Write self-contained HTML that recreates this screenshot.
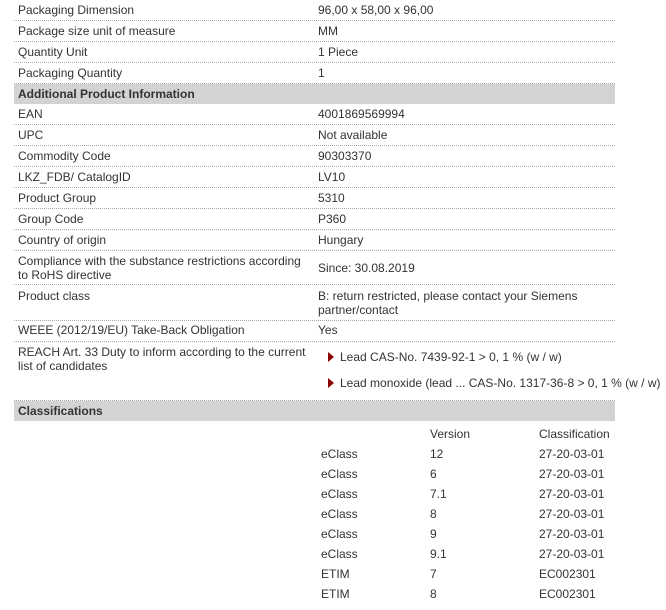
<!DOCTYPE html>
<html><head><meta charset="utf-8"><style>
body{margin:0;width:666px;height:610px;background:#fff;font-family:"Liberation Sans",Arial,sans-serif;font-size:12px;color:#333;position:relative;overflow:hidden}
.t{position:absolute;line-height:14px;white-space:nowrap}
.l{position:absolute;left:14px;width:601px;height:0;border-top:1px dotted #aaa}
.h{position:absolute;left:14px;width:601px;height:20px;background:#d3d3d3}
b{font-weight:bold}
.tri{display:inline-block;width:0;height:0;border-left:6px solid #8b0000;border-top:5px solid transparent;border-bottom:5px solid transparent;margin-right:6px;vertical-align:-1px}
</style></head><body>
<div class="l" style="top:20px"></div>
<div class="l" style="top:41px"></div>
<div class="l" style="top:62px"></div>
<div class="l" style="top:83px"></div>
<div class="h" style="top:84px"></div>
<div class="l" style="top:124px"></div>
<div class="l" style="top:145px"></div>
<div class="l" style="top:166px"></div>
<div class="l" style="top:187px"></div>
<div class="l" style="top:208px"></div>
<div class="l" style="top:229px"></div>
<div class="l" style="top:250px"></div>
<div class="l" style="top:284px"></div>
<div class="l" style="top:320px"></div>
<div class="l" style="top:341px"></div>
<div class="l" style="top:400px"></div>
<div class="h" style="top:401px"></div>

<div class="t" style="left:18px;top:3px">Packaging Dimension</div><div class="t" style="left:318px;top:3px">96,00 x 58,00 x 96,00</div>
<div class="t" style="left:18px;top:24px">Package size unit of measure</div><div class="t" style="left:318px;top:24px">MM</div>
<div class="t" style="left:18px;top:45px">Quantity Unit</div><div class="t" style="left:318px;top:45px">1 Piece</div>
<div class="t" style="left:18px;top:66px">Packaging Quantity</div><div class="t" style="left:318px;top:66px">1</div>
<div class="t" style="left:18px;top:87px"><b>Additional Product Information</b></div>
<div class="t" style="left:18px;top:107px">EAN</div><div class="t" style="left:318px;top:107px">4001869569994</div>
<div class="t" style="left:18px;top:128px">UPC</div><div class="t" style="left:318px;top:128px">Not available</div>
<div class="t" style="left:18px;top:149px">Commodity Code</div><div class="t" style="left:318px;top:149px">90303370</div>
<div class="t" style="left:18px;top:170px">LKZ_FDB/ CatalogID</div><div class="t" style="left:318px;top:170px">LV10</div>
<div class="t" style="left:18px;top:191px">Product Group</div><div class="t" style="left:318px;top:191px">5310</div>
<div class="t" style="left:18px;top:212px">Group Code</div><div class="t" style="left:318px;top:212px">P360</div>
<div class="t" style="left:18px;top:233px">Country of origin</div><div class="t" style="left:318px;top:233px">Hungary</div>
<div class="t" style="left:18px;top:254px">Compliance with the substance restrictions according<br>to RoHS directive</div><div class="t" style="left:318px;top:261px">Since: 30.08.2019</div>
<div class="t" style="left:18px;top:289px">Product class</div><div class="t" style="left:318px;top:289px">B: return restricted, please contact your Siemens<br>partner/contact</div>
<div class="t" style="left:18px;top:323px">WEEE (2012/19/EU) Take-Back Obligation</div><div class="t" style="left:318px;top:323px">Yes</div>
<div class="t" style="left:18px;top:345px">REACH Art. 33 Duty to inform according to the current<br>list of candidates</div>
<div class="t" style="left:328px;top:350px"><span class="tri"></span>Lead CAS-No. 7439-92-1 &gt; 0, 1 % (w / w)</div>
<div class="t" style="left:328px;top:376px"><span class="tri"></span>Lead monoxide (lead ... CAS-No. 1317-36-8 &gt; 0, 1 % (w / w)</div>
<div class="t" style="left:18px;top:404px"><b>Classifications</b></div>

<div class="t" style="left:430px;top:427px">Version</div><div class="t" style="left:539px;top:427px">Classification</div>
<div class="t" style="left:321px;top:447px">eClass</div><div class="t" style="left:430px;top:447px">12</div><div class="t" style="left:539px;top:447px">27-20-03-01</div>
<div class="t" style="left:321px;top:467px">eClass</div><div class="t" style="left:430px;top:467px">6</div><div class="t" style="left:539px;top:467px">27-20-03-01</div>
<div class="t" style="left:321px;top:487px">eClass</div><div class="t" style="left:430px;top:487px">7.1</div><div class="t" style="left:539px;top:487px">27-20-03-01</div>
<div class="t" style="left:321px;top:507px">eClass</div><div class="t" style="left:430px;top:507px">8</div><div class="t" style="left:539px;top:507px">27-20-03-01</div>
<div class="t" style="left:321px;top:527px">eClass</div><div class="t" style="left:430px;top:527px">9</div><div class="t" style="left:539px;top:527px">27-20-03-01</div>
<div class="t" style="left:321px;top:547px">eClass</div><div class="t" style="left:430px;top:547px">9.1</div><div class="t" style="left:539px;top:547px">27-20-03-01</div>
<div class="t" style="left:321px;top:567px">ETIM</div><div class="t" style="left:430px;top:567px">7</div><div class="t" style="left:539px;top:567px">EC002301</div>
<div class="t" style="left:321px;top:587px">ETIM</div><div class="t" style="left:430px;top:587px">8</div><div class="t" style="left:539px;top:587px">EC002301</div>
</body></html>
